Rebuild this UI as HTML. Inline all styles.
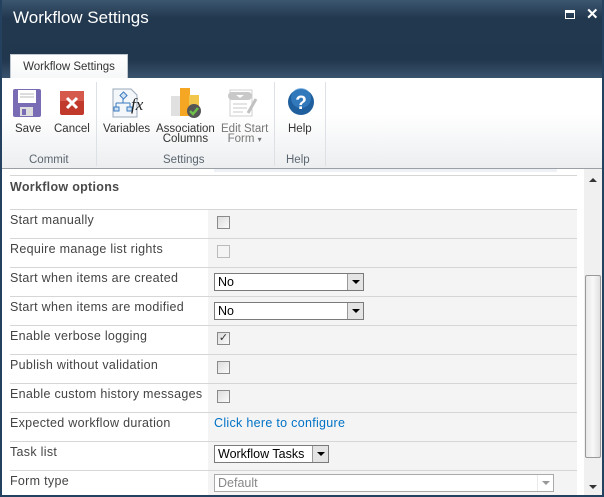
<!DOCTYPE html>
<html><head><meta charset="utf-8"><style>
*{margin:0;padding:0;box-sizing:border-box}
body{width:604px;height:497px;overflow:hidden;background:#24415f;font-family:"Liberation Sans",sans-serif;position:relative}
.title{position:absolute;left:2px;top:0;width:600px;height:78px;background:linear-gradient(#3c5670 0,#22384f 18px,#21374e 60px,#3a536d 78px)}
.title h1{position:absolute;left:11px;top:8px;font-weight:normal;font-size:17px;color:#fff}
.tab{position:absolute;left:10px;top:54px;width:118px;height:25px;background:linear-gradient(#fff,#f6f7f8);border:1px solid #c0c7cf;border-bottom:none;font-size:11.5px;color:#333;text-align:center;line-height:25px}
.rib{position:absolute;left:2px;top:78px;width:600px;height:91px;background:linear-gradient(#fff 40%,#eceef0);border-bottom:1px solid #9aa0a6}
.sep{position:absolute;top:4px;width:1px;height:84px;background:#dde0e4}
.btn{position:absolute;top:0;font-size:11.5px;color:#333;text-align:center;line-height:10px}
.grp{position:absolute;top:76px;font-size:11.5px;color:#5c6670}
.content{position:absolute;left:2px;top:169px;width:582px;height:326px;background:#fff;overflow:hidden}
.gray{position:absolute;left:206px;top:40px;width:369px;height:300px;background:#f4f4f4}
.line{position:absolute;left:8px;width:567px;height:1px;background:#d6d6d6}
.lbl{position:absolute;left:8px;font-size:12.5px;letter-spacing:.3px;color:#444}
.cb{position:absolute;left:215px;width:13px;height:13px;border:1px solid #8a8a8a;background:linear-gradient(135deg,#dcdcdc,#fafafa)}
.sel{position:absolute;left:212px;height:18px;border:1px solid #7a7a7a;background:#fff;font-size:12.5px;line-height:16px;padding-left:3px;color:#000}
.sel i{position:absolute;right:0;top:0;width:16px;height:16px;background:#e4e4e4;border-left:1px solid #999}
.sel i:after{content:"";position:absolute;left:4px;top:6px;border:4px solid transparent;border-top:4px solid #000;border-bottom:0}
.sb{position:absolute;left:584px;top:169px;width:18px;height:326px;background:#f0f0f0}
</style></head><body>
<div class="title"><h1>Workflow Settings</h1>
<div style="position:absolute;left:563px;top:10px;width:10px;height:9px;border:1.5px solid #fff;border-top-width:3px"></div>
<div style="position:absolute;left:584px;top:5px;color:#fff;font-size:15px;font-weight:bold">✕</div>
</div>
<div class="tab">Workflow Settings</div>
<div class="rib">
<div class="sep" style="left:94px"></div><div class="sep" style="left:272px"></div><div class="sep" style="left:323px"></div>
<svg style="position:absolute;left:10px;top:10px" width="30" height="30"><rect x="1" y="1" width="28" height="28" rx="2" fill="#7a6bb5"/><rect x="6" y="2" width="18" height="13" fill="#fff"/><line x1="8" y1="6" x2="22" y2="6" stroke="#bbb"/><line x1="8" y1="9" x2="22" y2="9" stroke="#bbb"/><rect x="8" y="19" width="13" height="9" fill="#ddd"/><rect x="10" y="21" width="4" height="6" fill="#7a6bb5"/></svg>
<svg style="position:absolute;left:57px;top:12px" width="26" height="26"><rect x="1" y="1" width="24" height="24" rx="2" fill="#c0392b"/><rect x="1" y="1" width="24" height="10" fill="#d65a4c"/><path d="M8 8L18 18M18 8L8 18" stroke="#fff" stroke-width="3"/></svg>
<svg style="position:absolute;left:109px;top:8px" width="34" height="32"><path d="M2 3h18l6 6v22H2z" fill="#f4f7fa" stroke="#9aaabb"/><rect x="10" y="7" width="5" height="5" fill="#cfe2f3" stroke="#3a7ac0" transform="rotate(45 12.5 9.5)"/><path d="M12 13v4M5 17h14M5 17v4M19 17v4" stroke="#3a7ac0"/><rect x="3" y="21" width="5" height="4" fill="#cfe2f3" stroke="#3a7ac0"/><rect x="16" y="21" width="5" height="4" fill="#cfe2f3" stroke="#3a7ac0"/><text x="20" y="24" font-family="Liberation Serif" font-style="italic" font-size="17" fill="#222">fx</text></svg>
<svg style="position:absolute;left:167px;top:8px" width="34" height="34"><rect x="2" y="10" width="10" height="20" fill="#e0e0e0"/><rect x="11" y="2" width="10" height="28" fill="#f5a623"/><rect x="20" y="9" width="10" height="21" fill="#f2c64a"/><circle cx="25" cy="25" r="7" fill="#555"/><path d="M21 25l3 3 5-6" stroke="#6cc04a" stroke-width="2.5" fill="none"/></svg>
<svg style="position:absolute;left:224px;top:9px" width="34" height="30" opacity=".45"><rect x="4" y="3" width="22" height="26" fill="#fff" stroke="#999"/><rect x="2" y="5" width="24" height="8" rx="4" fill="#888"/><path d="M10 8h8l-4 3z" fill="#fff"/><path d="M7 17h14M7 21h14M7 25h10" stroke="#888"/><path d="M22 26l8-14" stroke="#777" stroke-width="3"/></svg>
<svg style="position:absolute;left:285px;top:10px" width="28" height="28"><circle cx="14" cy="14" r="13" fill="#1f5f9e"/><circle cx="14" cy="10" r="10" fill="#3f8ad0" opacity=".6"/><text x="14" y="21" text-anchor="middle" font-weight="bold" font-size="19" fill="#fff">?</text></svg>
<div class="btn" style="left:13px;top:46px">Save</div>
<div class="btn" style="left:52px;top:46px">Cancel</div>
<div class="btn" style="left:101px;top:46px">Variables</div>
<div class="btn" style="left:154px;top:46px">Association<br>Columns</div>
<div class="btn" style="left:219px;top:46px;color:#777">Edit Start<br>Form <span style="font-size:8px">▾</span></div>
<div class="btn" style="left:286px;top:46px">Help</div>
<div class="grp" style="left:27px">Commit</div>
<div class="grp" style="left:161px">Settings</div>
<div class="grp" style="left:284px">Help</div>
</div>
<div class="content">
<div style="position:absolute;left:212px;top:0;width:343px;height:3px;background:#eef2f7"></div>
<div class="line" style="top:6px"></div>
<div class="gray"></div>
<div class="lbl" style="top:11px;font-weight:bold;color:#4a4a4a">Workflow options</div>
<div class="line" style="top:40px"></div>
<div class="lbl" style="top:44px">Start manually</div><div class="cb" style="top:47px"></div>
<div class="line" style="top:69px"></div>
<div class="lbl" style="top:73px">Require manage list rights</div><div class="cb" style="top:76px;border-color:#bbb;background:#f4f4f4"></div>
<div class="line" style="top:98px"></div>
<div class="lbl" style="top:102px">Start when items are created</div><div class="sel" style="top:104px;width:150px">No<i></i></div>
<div class="line" style="top:127px"></div>
<div class="lbl" style="top:131px">Start when items are modified</div><div class="sel" style="top:133px;width:150px">No<i></i></div>
<div class="line" style="top:156px"></div>
<div class="lbl" style="top:160px">Enable verbose logging</div><div class="cb" style="top:163px;font-size:11px;line-height:10px;text-align:center;color:#333">✓</div>
<div class="line" style="top:185px"></div>
<div class="lbl" style="top:189px">Publish without validation</div><div class="cb" style="top:192px"></div>
<div class="line" style="top:214px"></div>
<div class="lbl" style="top:218px">Enable custom history messages</div><div class="cb" style="top:221px"></div>
<div class="line" style="top:243px"></div>
<div class="lbl" style="top:247px">Expected workflow duration</div><div class="lbl" style="left:212px;top:247px;color:#0072c6">Click here to configure</div>
<div class="line" style="top:272px"></div>
<div class="lbl" style="top:276px">Task list</div><div class="sel" style="top:276px;width:115px">Workflow Tasks<i></i></div>
<div class="line" style="top:301px"></div>
<div class="lbl" style="top:305px">Form type</div><div class="sel" style="top:305px;width:340px;border-color:#aaa;color:#888">Default<i style="background:#fff;border-left-color:#ccc;opacity:.4"></i></div>
</div>
<div class="sb">
<div style="position:absolute;left:5px;top:9px;border:4px solid transparent;border-bottom:4px solid #333;border-top:0"></div>
<div style="position:absolute;left:1px;top:106px;width:16px;height:183px;background:linear-gradient(90deg,#e8e8e8,#f8f8f8,#e0e0e0);border:1px solid #999;border-radius:2px"></div>
<div style="position:absolute;left:5px;top:316px;border:4px solid transparent;border-top:4px solid #333;border-bottom:0"></div>
</div>
</body></html>
